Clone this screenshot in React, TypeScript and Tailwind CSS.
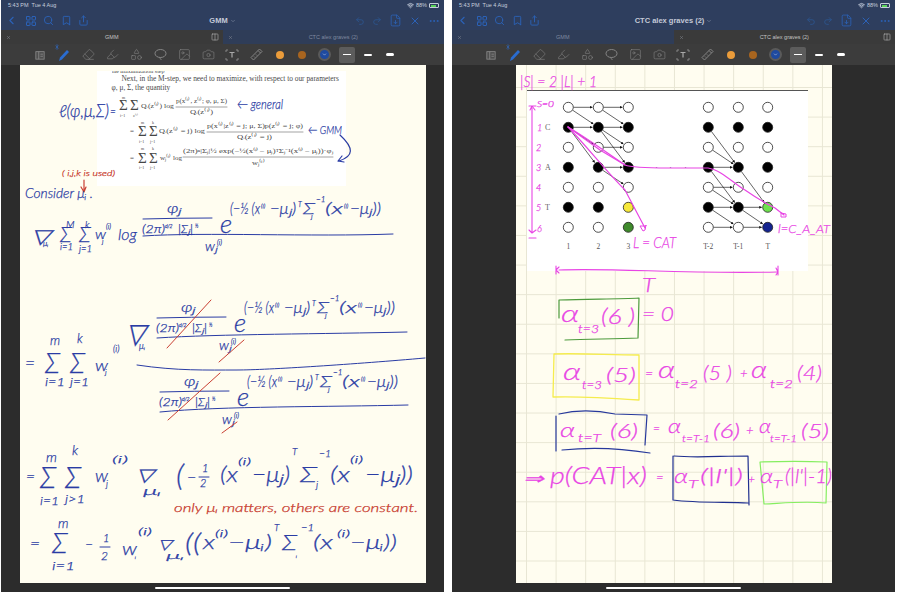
import React from "react";
import { Bookmark, Bluetooth, Camera, ChevronDown, ChevronLeft, Columns2, Ellipsis, Eraser, FileDown, Highlighter, Image, LayoutGrid, Redo2, Search, Share, Shapes, Undo2, Wifi, X } from "lucide-react";

const BLUE = "#2a3ca4";
const RED = "#c93f32";
const PINK = "#e845e4";

const fonts = {
  hand: "font-['Lato',sans-serif] italic font-light",
  serif: "font-['Liberation_Serif',serif]",
};

type TProps = { x: number; y: number; s: number; w?: number; c?: string; f?: "hand" | "serif"; children: React.ReactNode };

// one piece of ink or pdf text, w squeezes it to the width in the picture
const T = ({ x, y, s, w, c = BLUE, f = "hand", children }: TProps) => (
  <text x={x} y={y} fontSize={s} fill={c} stroke={f === "hand" ? c : undefined} strokeWidth={f === "hand" ? 0.25 : undefined} className={fonts[f]} textLength={w} lengthAdjust={w ? "spacingAndGlyphs" : undefined}>
    {children}
  </text>
);

const Ink = ({ d, c = BLUE, w = 1 }: { d: string; c?: string; w?: number }) => (
  <path d={d} fill="none" stroke={c} strokeWidth={w} strokeLinecap="round" strokeLinejoin="round" />
);

const Tool = ({ children, className = "w-6" }: { children?: React.ReactNode; className?: string }) => (
  <div className={`flex items-center justify-center h-full shrink-0 ${className}`}>{children}</div>
);

const StatusBar = () => (
  <div className="h-[11px] flex items-center justify-between pl-[7px] pr-[5px] text-[5.5px] text-[#c6cedd] font-['Liberation_Sans',sans-serif]">
    <span>5:43 PM&nbsp;&nbsp;Tue 4 Aug</span>
    <div className="flex items-center gap-[2px]">
      <Wifi size={7} strokeWidth={3} />
      <span>88%</span>
      <div className="w-[10px] h-[5px] rounded-[1px] border-[0.5px] border-[#c6cedd] p-[0.5px]">
        <div className="w-[85%] h-full bg-[#5bd25b]" />
      </div>
    </div>
  </div>
);

const NavBar = ({ title }: { title: string }) => (
  <div className="h-[19px] relative flex items-center justify-between pl-[4px] pr-[4px] text-[#2b62b8]">
    <div className="flex items-center gap-[6.5px]">
      <ChevronLeft size={13} />
      <LayoutGrid size={12} />
      <Search size={11} />
      <Bookmark size={11} />
      <Share size={11} />
    </div>
    <div className="absolute inset-x-0 flex items-center justify-center gap-[2px] text-[7.5px] font-bold text-[#c4cad8] font-['Liberation_Sans',sans-serif]">
      {title}
      <ChevronDown size={6} className="text-[#8d98ad]" />
    </div>
    <div className="flex items-center gap-[7px]">
      <Undo2 size={10} className="text-[#2d558f]" />
      <Redo2 size={10} className="text-[#2d558f]" />
      <FileDown size={13} strokeWidth={1.5} />
      <X size={12} />
      <Ellipsis size={12} />
    </div>
  </div>
);

const Tabs = ({ left }: { left: boolean }) => {
  const tab = "h-full w-1/2 relative flex items-center justify-center text-[5.5px] font-['Liberation_Sans',sans-serif]";
  const on = "bg-[#3a3a3a] text-[#c4c4c4]";
  const off = "bg-[#2f3d58] text-[#7f8aa0]";
  return (
    <div className="h-[14px] flex">
      <div className={`${tab} ${left ? on : off}`}>
        <X size={5} className="absolute left-[5px] text-[#8a8f99]" />
        GMM
        {left && <Columns2 size={8} className="absolute right-[4px] text-[#aaaaaa]" />}
      </div>
      <div className={`${tab} ${left ? off : on}`}>
        <X size={5} className="absolute left-[5px] text-[#8a8f99]" />
        CTC alex graves (2)
        {!left && <Columns2 size={8} className="absolute right-[4px] text-[#aaaaaa]" />}
      </div>
    </div>
  );
};

const Toolbar = () => {
  const gray = "text-[#8c8c8c]";
  return (
    <div className="h-[21px] bg-[#3c3c3c] flex items-center pl-[27px]">
      <Tool>
        <svg width="10" height="10" viewBox="0 0 12 12" fill="none" stroke="#8a8a8a">
          <rect x="1" y="2" width="10" height="9" fill="#4e4e4e" />
          <path d="M4.5 2v9M6.5 5h3M6.5 7.5h3" />
        </svg>
      </Tool>
      <Tool>
        <div className="relative">
          <Bluetooth size={6} className="absolute -left-[3px] -top-[4px] text-[#2f6fd0]" />
          <svg width="14" height="14" viewBox="0 0 14 14"><path d="M2 13l1-3.5 7-7.5 2 2-7 7.5z" fill="#2a6cd0" /></svg>
        </div>
      </Tool>
      <Tool><Eraser size={13} strokeWidth={1} className={gray} /></Tool>
      <Tool><Highlighter size={13} strokeWidth={1} className={gray} /></Tool>
      <Tool><Shapes size={13} strokeWidth={1} className={gray} /></Tool>
      <Tool>
        <svg width="13" height="13" viewBox="0 0 13 13" fill="none" stroke="#8c8c8c" strokeWidth="0.9">
          <path d="M6.5 1.5c3 0 5.5 1.6 5.5 4s-2.5 4-5.5 4-5.5-1.6-5.5-4 2.5-4 5.5-4zM6 9.5c0 1 .5 1.5 1.5 2.5" />
        </svg>
      </Tool>
      <Tool><Image size={13} strokeWidth={1} className={gray} /></Tool>
      <Tool><Camera size={13} strokeWidth={1} className={gray} /></Tool>
      <Tool>
        <svg width="14" height="12" viewBox="0 0 14 12" fill="none" stroke="#8c8c8c" strokeWidth="0.9">
          <path d="M1 3V1h2M11 1h2v2M1 9v2h2M11 11h2V9" />
          <path d="M4.5 3.5h5M7 3.5v5" strokeWidth="1.2" stroke="#a8a8a8" />
        </svg>
      </Tool>
      <Tool>
        <svg width="13" height="13" viewBox="0 0 13 13" fill="none" stroke="#8c8c8c" strokeWidth="0.9">
          <path d="M1 9.5 8 2.5l2.5 2.5-7 7zM8 2.5l1.5-1.5L12 3.5 10.5 5M4 8.5l1 1M6 6.5l1 1" />
        </svg>
      </Tool>
      <Tool><div className="w-[8px] h-[8px] rounded-full bg-[#eb9c3a]" /></Tool>
      <Tool className="w-[20px]"><div className="w-[8px] h-[8px] rounded-full bg-[#a8651f]" /></Tool>
      <Tool>
        <div className="w-[13px] h-[13px] rounded-full bg-[#1e4aa0] border-[2px] border-[#5a5a5a] flex items-center justify-center">
          <ChevronDown size={5} className="text-white" />
        </div>
      </Tool>
      <div className="ml-[3px] w-[16px] h-[16px] rounded-[2px] bg-[#5c5c5c] flex items-center justify-center">
        <div className="w-[8px] h-[1px] bg-white" />
      </div>
      <Tool className="w-[26px]"><div className="w-[8px] h-[2px] bg-white rounded-full" /></Tool>
      <Tool className="w-[18px]"><div className="w-[8px] h-[3px] bg-white rounded-full" /></Tool>
    </div>
  );
};

const Sum = ({ x, y, s, top, topX, bot, botW, botY, topY }: { x: number; y: number; s: number; top: string; topX: number; topY: number; bot: string; botW: number; botY: number }) => (
  <>
    <T x={x} y={y} s={s}>Σ</T>
    <T x={topX} y={topY} s={s * 0.48}>{top}</T>
    <T x={x} y={botY} s={s * 0.42} w={botW}>{bot}</T>
  </>
);

// the gaussian over w_j that gets written out three times
const Density = ({ x, y, line }: { x: number; y: number; line: string }) => (
  <>
    <T x={x + 24} y={y - 6} s={14} w={14}>φⱼ</T>
    <Ink d={`M${x} ${y}q35 -1 69 -1`} />
    <T x={x - 1} y={y + 14} s={11} w={23}>(2π)</T>
    <T x={x + 22} y={y + 9} s={5}>d/2</T>
    <T x={x + 35} y={y + 14} s={11} w={15}>|Σⱼ|</T>
    <T x={x + 52} y={y + 9} s={5}>½</T>
    <T x={x + 77} y={y + 14} s={26}>e</T>
    <T x={x + 87} y={y - 5} s={15} w={30}>(−½ (x</T>
    <T x={x + 118} y={y - 11} s={6}>(i)</T>
    <T x={x + 127} y={y - 5} s={15} w={26}>−μⱼ)</T>
    <T x={x + 155} y={y - 12} s={7}>T</T>
    <T x={x + 160} y={y - 5} s={16} w={12}>Σ</T>
    <T x={x + 168} y={y} s={8}>j</T>
    <T x={x + 173} y={y - 17} s={8}>−1</T>
    <T x={x + 182} y={y - 5} s={15} w={18}>(x</T>
    <T x={x + 201} y={y - 11} s={6}>(i)</T>
    <T x={x + 207} y={y - 5} s={15} w={31}>−μⱼ))</T>
    <Ink d={line} />
    <T x={x + 62} y={y + 32} s={13} w={12}>wⱼ</T>
    <T x={x + 74} y={y + 26} s={7}>(i)</T>
  </>
);

const PdfMath = () => {
  const c = "#454545";
  const big = (x: number, y: number) => (
    <T f="serif" c={c} x={x} y={y} s={15}>Σ</T>
  );
  return (
    <>
      {big(119, 110)}{big(130, 110)}
      <T f="serif" c={c} x={122} y={99} s={4}>m</T>
      <T f="serif" c={c} x={120} y={117} s={4}>i=1</T>
      <T f="serif" c={c} x={133} y={117} s={4}>z⁽ⁱ⁾</T>
      <T f="serif" c={c} x={141} y={108} s={7} w={33}>Qᵢ(z⁽ⁱ⁾) log</T>
      <T f="serif" c={c} x={176} y={103} s={7} w={51}>p(x⁽ⁱ⁾, z⁽ⁱ⁾; φ, μ, Σ)</T>
      <Ink c={c} w={0.5} d="M176 107h51" />
      <T f="serif" c={c} x={190} y={114} s={7} w={23}>Qᵢ(z⁽ⁱ⁾)</T>

      <T f="serif" c={c} x={130} y={133} s={7}>=</T>
      {big(138, 136)}{big(149, 136)}
      <T f="serif" c={c} x={141} y={124} s={4}>m</T>
      <T f="serif" c={c} x={152} y={124} s={4}>k</T>
      <T f="serif" c={c} x={139} y={143} s={4}>i=1</T>
      <T f="serif" c={c} x={150} y={143} s={4}>j=1</T>
      <T f="serif" c={c} x={159} y={133} s={7} w={46}>Qᵢ(z⁽ⁱ⁾ = j) log</T>
      <T f="serif" c={c} x={207} y={128} s={7} w={96}>p(x⁽ⁱ⁾|z⁽ⁱ⁾ = j; μ, Σ)p(z⁽ⁱ⁾ = j; φ)</T>
      <Ink c={c} w={0.5} d="M207 132h96" />
      <T f="serif" c={c} x={237} y={139} s={7} w={35}>Qᵢ(z⁽ⁱ⁾ = j)</T>

      <T f="serif" c={c} x={130} y={160} s={7}>=</T>
      {big(138, 163)}{big(149, 163)}
      <T f="serif" c={c} x={141} y={150} s={4}>m</T>
      <T f="serif" c={c} x={152} y={150} s={4}>k</T>
      <T f="serif" c={c} x={139} y={169} s={4}>i=1</T>
      <T f="serif" c={c} x={150} y={169} s={4}>j=1</T>
      <T f="serif" c={c} x={160} y={160} s={7} w={22}>wⱼ⁽ⁱ⁾ log</T>
      <T f="serif" c={c} x={183} y={153} s={6} w={150}>(2π)ⁿ|Σⱼ|½ exp(−½(x⁽ⁱ⁾ − μⱼ)ᵀΣⱼ⁻¹(x⁽ⁱ⁾ − μⱼ))·φⱼ</T>
      <Ink c={c} w={0.5} d="M183 157h150" />
      <T f="serif" c={c} x={252} y={165} s={7} w={13}>wⱼ⁽ⁱ⁾</T>
    </>
  );
};

const GmmPage = () => (
  <div className="w-[406px] h-[518px] bg-[#fffdf0] relative overflow-hidden">
    <div className="absolute left-[77px] top-[6px] w-[249px] h-[115px] bg-white text-[7.4px] leading-[8.5px] text-[#4a4a4a] font-['Liberation_Serif',serif] px-[15px]">
      <div className="h-[2.5px] overflow-hidden text-[6px] leading-[1px]">the maximization step</div>
      <p className="pl-[10px] mt-[1px] pt-[0.5px] whitespace-nowrap">Next, in the M-step, we need to maximize, with respect to our parameters</p>
      <p>φ, μ, Σ, the quantity</p>
    </div>
    <svg viewBox="20 65 406 518" className="absolute inset-0 w-full h-full">
      <PdfMath />

      <T x={59} y={117} s={17} w={50}>ℓ(φ,μ,Σ)</T>
      <T x={110} y={115} s={10}>=</T>
      <T x={237} y={109} s={14} w={46}>← general</T>
      <T x={308} y={134} s={12} w={34}>← GMM</T>
      <Ink d="M340 135C354 148 354 156 339 161M338 161l4-5M338 161l6 1" w={1.2} />
      <T x={62} y={176} s={8} c={RED} w={53}>( i,j,k is used)</T>
      <Ink c={RED} d="M84 180v11M81 187l3 5 2-5" w={1.2} />
      <T x={25} y={198} s={14} w={68}>Consider μᵢ .</T>

      <T x={31} y={243} s={20} w={19}>▽</T>
      <T x={43} y={246} s={8}>μᵢ</T>
      <Sum x={60} y={242} s={21} top="M" topX={66} topY={228} bot="i=1" botW={13} botY={250} />
      <Sum x={79} y={242} s={21} top="k" topX={85} topY={228} bot="j=1" botW={13} botY={252} />
      <T x={95} y={239} s={14} w={11}>w</T>
      <T x={102} y={244} s={7}>j</T>
      <T x={106} y={229} s={7}>(i)</T>
      <T x={118} y={240} s={16} w={19}>log</T>
      <Density x={143} y={219} line="M143 236c60 -4 170 1 250 -2" />

      <T x={25} y={369} s={17} w={10}>=</T>
      <Sum x={45} y={373} s={27} top="m" topX={50} topY={345} bot="i=1" botW={20} botY={386} />
      <Sum x={70} y={373} s={27} top="k" topX={77} topY={343} bot="j=1" botW={19} botY={386} />
      <T x={95} y={371} s={16} w={13}>w</T>
      <T x={105} y={375} s={8}>j</T>
      <T x={113} y={352} s={9}>(i)</T>
      <T x={126} y={343} s={28} w={20}>▽</T>
      <T x={139} y={349} s={9}>μᵢ</T>
      <Density x={157} y={318} line="M157 338c60 -4 170 -4 250 -6" />
      <Ink d="M137 365c40 6 70 5 100 5s120 -6 188 -12" />
      <Density x={160} y={392} line="M160 412c60 -6 170 -5 248 -7" />
      <Ink c={RED} d="M167 348 211 300M219 362 244 340M168 420 220 373M222 433 237 422" />

      <T x={26} y={482} s={16} w={9}>=</T>
      <Sum x={40} y={488} s={29} top="m" topX={46} topY={462} bot="i=1" botW={19} botY={505} />
      <Sum x={65} y={488} s={29} top="k" topX={72} topY={455} bot="j>1" botW={20} botY={503} />
      <T x={95} y={482} s={17} w={13}>w</T>
      <T x={106} y={487} s={9}>j</T>
      <T x={112} y={463} s={10} w={16}>(i)</T>
      <T x={136} y={481} s={18} w={18}>▽</T>
      <T x={143} y={495} s={11} w={18}>μᵢ</T>
      <T x={176} y={486} s={30} w={8}>(</T>
      <T x={187} y={483} s={16}>−</T>
      <T x={202} y={472} s={11}>1</T>
      <Ink d="M199 477h10" />
      <T x={200} y={487} s={11}>2</T>
      <T x={220} y={482} s={22} w={18}>(x</T>
      <T x={238} y={465} s={9} w={13}>(i)</T>
      <T x={252} y={482} s={22} w={38}>−μⱼ)</T>
      <T x={292} y={455} s={10}>T</T>
      <T x={300} y={482} s={22} w={17}>Σ</T>
      <T x={316} y={488} s={10}>j</T>
      <T x={319} y={457} s={10} w={12}>−1</T>
      <T x={330} y={482} s={22} w={20}>(x</T>
      <T x={350} y={463} s={9} w={13}>(i)</T>
      <T x={365} y={482} s={22} w={48}>−μⱼ))</T>

      <T x={174} y={512} s={11} c={RED} w={244}>only μᵢ matters, others are constant.</T>

      <T x={30} y={549} s={15} w={10}>=</T>
      <Sum x={52} y={553} s={28} top="m" topX={58} topY={528} bot="i=1" botW={23} botY={570} />
      <T x={85} y={549} s={14}>−</T>
      <T x={103} y={542} s={11}>1</T>
      <Ink d="M100 547h10" />
      <T x={101} y={560} s={12}>2</T>
      <T x={122} y={555} s={17} w={15}>w</T>
      <T x={135} y={558} s={9}>ᵢ</T>
      <T x={138} y={535} s={9} w={14}>(i)</T>
      <T x={158} y={549} s={14} w={14}>▽</T>
      <T x={166} y={559} s={10} w={18}>μᵢ</T>
      <T x={185} y={552} s={26} w={16}>((</T>
      <T x={203} y={549} s={20} w={12}>x</T>
      <T x={215} y={537} s={9} w={13}>(i)</T>
      <T x={228} y={549} s={20} w={44}>−μᵢ)</T>
      <T x={274} y={531} s={10}>T</T>
      <T x={282} y={550} s={21} w={15}>Σ</T>
      <T x={296} y={557} s={9}>ᵢ</T>
      <T x={301} y={531} s={9} w={13}>−1</T>
      <T x={313} y={549} s={20} w={20}>(x</T>
      <T x={337} y={537} s={9} w={13}>(i)</T>
      <T x={350} y={549} s={20} w={47}>−μᵢ))</T>
    </svg>
  </div>
);

const COLS = [568.3, 598.3, 628.3, 708.3, 738.3, 767.7];
const ROWS = [107.3, 127.3, 147.3, 167.3, 187.3, 207.3, 227.3];

// from column, from row, to row; the arrow always goes to the next column
const ARROWS = [
  [0, 0, 0], [0, 0, 1], [0, 1, 1], [0, 1, 2], [0, 1, 3],
  [1, 0, 0], [1, 0, 1], [1, 1, 1], [1, 1, 2], [1, 1, 3], [1, 2, 2], [1, 3, 3], [1, 3, 4],
  [3, 1, 3], [3, 2, 3], [3, 3, 3], [3, 3, 5], [3, 4, 4], [3, 4, 5], [3, 5, 5], [3, 5, 6], [3, 6, 6],
  [4, 3, 5], [4, 5, 5], [4, 5, 6], [4, 6, 6],
];

const Trellis = () => {
  const fillFor = (col: number, row: number) => {
    if (col === 2 && row === 5) return "#f6e83a";
    if (col === 2 && row === 6) return "#3f8a2c";
    if (col === 5 && row === 5) return "#6ee04e";
    if (col === 5 && row === 6) return "#14248e";
    return row % 2 === 1 ? "#000000" : "#ffffff";
  };
  return (
    <>
      <defs>
        <marker id="head" markerWidth="4" markerHeight="4" refX="3.5" refY="2" orient="auto">
          <path d="M0 0 4 2 0 4z" fill="#111111" />
        </marker>
      </defs>
      {ARROWS.map(([col, a, b], i) => {
        const x1 = COLS[col], y1 = ROWS[a], x2 = COLS[col + 1], y2 = ROWS[b];
        const len = Math.hypot(x2 - x1, y2 - y1);
        const ux = (x2 - x1) / len, uy = (y2 - y1) / len;
        return (
          <line key={i} x1={x1 + ux * 5} y1={y1 + uy * 5} x2={x2 - ux * 6} y2={y2 - uy * 6} stroke="#222222" strokeWidth="0.7" markerEnd="url(#head)" />
        );
      })}
      {COLS.map((x, c) =>
        ROWS.map((y, r) => <circle key={`${c}-${r}`} cx={x} cy={y} r="5" fill={fillFor(c, r)} stroke="#222222" strokeWidth="0.8" />)
      )}
      <T f="serif" c="#666666" x={545} y={130} s={8}>C</T>
      <T f="serif" c="#666666" x={545} y={170} s={8}>A</T>
      <T f="serif" c="#666666" x={545} y={210} s={8}>T</T>
      {["1", "2", "3", "T-2", "T-1", "T"].map((t, i) => (
        <text key={t} x={COLS[i]} y={249} fontSize={7.5} fill="#555555" textAnchor="middle" className={fonts.serif}>{t}</text>
      ))}
      <T f="serif" c="#444444" x={655} y={170} s={9}>·</T>
      <T f="serif" c="#444444" x={669} y={170} s={9}>·</T>
      <T f="serif" c="#444444" x={684} y={170} s={9}>·</T>
    </>
  );
};

const P = (p: Omit<TProps, "c">) => <T {...p} c={PINK} />;

const CtcPage = () => (
  <div className="w-[316px] h-[518px] relative overflow-hidden bg-[#fffdf0] bg-[linear-gradient(#e8e6d4_1px,transparent_1px),linear-gradient(90deg,#e8e6d4_1px,transparent_1px)] bg-[size:29.6px_29.6px] bg-[position:10px_22px]">
    <div className="absolute left-[11px] top-[25px] w-[281px] h-[181px] bg-white border-t-[1.5px] border-[#555555]" />
    <svg viewBox="516 65 316 518" className="absolute inset-0 w-full h-full">
      <Trellis />
      <P x={520} y={87} s={16} w={77}>|S| = 2 |L| + 1</P>
      <P x={537} y={107} s={7} w={17}>S=0</P>
      <P x={537} y={131} s={9}>1</P>
      <P x={536} y={151} s={9}>2</P>
      <P x={536} y={171} s={9}>3</P>
      <P x={536} y={191} s={9}>4</P>
      <P x={536} y={211} s={9}>5</P>
      <P x={537} y={232} s={9}>6</P>
      <Ink c={PINK} w={1.1} d="M529 106h7M532 108v124M529 238h7M530 110l2-4 3 4M529 230l3 3 4-3" />
      <Ink c={PINK} w={1.2} d="M568 127C590 140 610 155 625 165C632 168 650 168 668 168L708 168C722 170 735 185 745 190C755 197 765 203 775 208L784 215" />
      <Ink c={PINK} w={1.2} d="M568 127C590 150 605 170 625 190L645 228" />
      <Ink c={PINK} w={1.2} d="M568 127L600 150L625 165" />
      <path d="M640 226l6 0 0 -1 -1 5 -2 1z" fill="none" stroke={PINK} />
      <path d="M781 213l5 1 0 3 -5 0z" fill="none" stroke={PINK} />
      <P x={633} y={248} s={16} w={43}>L = CAT</P>
      <P x={778} y={233} s={12} w={52}>l=C_A_AT</P>
      <Ink c={PINK} w={1.1} d="M556 266v8M559 267l-3 3 3 3M559 270C620 268 680 274 777 272M776 268l2 4-2 3M778 266v9" />
      <P x={642} y={292} s={19} w={13}>T</P>

      <Ink c="#4c9a3c" w={1.2} d="M559 300C590 299 620 299 639 298L638 338C615 339 590 339 565 340M559 300v18" />
      <P x={561} y={322} s={24} w={18}>α</P>
      <P x={578} y={333} s={12} w={21}>t=3</P>
      <P x={601} y={324} s={21} w={34}>(6 )</P>
      <P x={642} y={321} s={20} w={32}>= 0</P>

      <Ink c="#f5ec4e" w={1.3} d="M554 354C580 353 610 355 639 355L639 400C610 398 580 396 553 397z" />
      <P x={563} y={380} s={24} w={18}>α</P>
      <P x={582} y={389} s={11} w={20}>t=3</P>
      <P x={606} y={382} s={19} w={30}>(5)</P>
      <P x={645} y={378} s={14}>=</P>
      <P x={658} y={378} s={24} w={17}>α</P>
      <P x={675} y={388} s={11} w={23}>t=2</P>
      <P x={703} y={380} s={19} w={29}>(5 )</P>
      <P x={740} y={378} s={13}>+</P>
      <P x={751} y={378} s={24} w={16}>α</P>
      <P x={770} y={388} s={11} w={23}>t=2</P>
      <P x={797} y={380} s={19} w={25}>(4)</P>

      <Ink c="#27399c" w={1.2} d="M556 416V451M559 414C580 409 600 411 615 414L647 415 645 445M562 450C590 447 620 448 650 453" />
      <P x={560} y={437} s={20} w={15}>α</P>
      <P x={578} y={442} s={11} w={23}>t=T</P>
      <P x={610} y={438} s={19} w={28}>(6)</P>
      <P x={653} y={433} s={12}>=</P>
      <P x={668} y={433} s={20} w={13}>α</P>
      <P x={682} y={442} s={10} w={28}>t=T-1</P>
      <P x={713} y={438} s={19} w={27}>(6)</P>
      <P x={746} y={435} s={13}>+</P>
      <P x={759} y={433} s={20} w={12}>α</P>
      <P x={770} y={442} s={9} w={27}>t=T-1</P>
      <P x={801} y={438} s={19} w={28}>(5)</P>

      <P x={523} y={484} s={16} w={20}>⇒</P>
      <P x={550} y={484} s={23} w={97}>p(CAT|x)</P>
      <P x={656} y={482} s={13}>=</P>
      <Ink c="#1f2f8f" w={1.2} d="M673 456V500C695 503 725 502 748 503M674 456C695 458 720 456 748 456L749 505" />
      <P x={674} y={483} s={20} w={14}>α</P>
      <P x={688} y={488} s={12} w={10}>T</P>
      <P x={700} y={483} s={20} w={43}>(|l'|)</P>
      <P x={748} y={483} s={12}>+</P>
      <Ink c="#86ee60" w={1.2} d="M760 462C785 461 805 461 827 462L826 503C805 501 785 503 764 504L760 462z" />
      <P x={760} y={483} s={20} w={13}>α</P>
      <P x={773} y={488} s={12} w={9}>T</P>
      <P x={785} y={483} s={20} w={47}>(|l'|-1)</P>
    </svg>
  </div>
);

const Pane = ({ title, left, children }: { title: string; left: boolean; children: React.ReactNode }) => (
  <div className="w-[443px] h-[592px] flex flex-col bg-[#2c2c2c]">
    <div className="bg-[#2e3e5e]">
      <StatusBar />
      <NavBar title={title} />
    </div>
    <Tabs left={left} />
    <Toolbar />
    <div className="flex justify-center">{children}</div>
    <div className="flex-1 flex items-center justify-center">
      <div className="w-[135px] h-[2px] rounded-full bg-white" />
    </div>
  </div>
);

export default function App() {
  return (
    <div className="w-[897px] h-[592px] bg-white flex gap-[8px] pl-[1px] overflow-hidden">
      <Pane title="GMM" left><GmmPage /></Pane>
      <Pane title="CTC alex graves (2)" left={false}><CtcPage /></Pane>
    </div>
  );
}
